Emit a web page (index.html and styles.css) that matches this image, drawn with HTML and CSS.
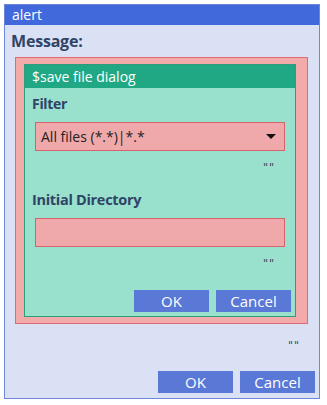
FILE: index.html
```html
<!DOCTYPE html>
<html lang="en">
<head>
    <meta charset="UTF-8">
    <title>alert</title>
    <link rel="stylesheet" href="styles.css">
</head>
<body>
    <div class="window">
        <div class="title">alert</div>
        <div class="window-body">
            <div class="label msg">Message:</div>
            <div class="frame">
                <div class="dialog">
                    <div class="dialog-title">$save file dialog</div>
                    <div class="dialog-body">
                        <div class="label">Filter</div>
                        <div class="field select">
                            <span>All files (*.*)|*.*</span>
                            <span class="arrow"></span>
                        </div>
                        <div class="quote">""</div>
                        <div class="label dir">Initial Directory</div>
                        <div class="field"></div>
                        <div class="quote">""</div>
                        <div class="buttons inner-buttons">
                            <button>OK</button>
                            <button>Cancel</button>
                        </div>
                    </div>
                </div>
            </div>
            <div class="quote outer">""</div>
            <div class="buttons outer-buttons">
                <button>OK</button>
                <button>Cancel</button>
            </div>
        </div>
    </div>
</body>
</html>
```

FILE: styles.css
```css
body {
    margin: 0;
    padding: 0;
    background-color: #fff;
    font-family: "Open Sans", "Noto Sans", sans-serif;
}

.window {
    margin: 4px 0 0 4px;
    width: 314px;
    height: 393px;
    border: 1px solid #6f87d8;
    background-color: #dbe1f5;
    display: flex;
    flex-direction: column;
}

.title {
    height: 20px;
    line-height: 19px;
    background-color: #4169dc;
    color: #fff;
    font-size: 14px;
    padding-left: 7px;
}

.window-body {
    flex: 1;
    display: flex;
    flex-direction: column;
}

.label {
    color: #2f4466;
    font-weight: bold;
    font-size: 14px;
    letter-spacing: -0.3px;
}

.msg {
    margin: 5px 0 0 6px;
    height: 22px;
    line-height: 22px;
    font-size: 16px;
    letter-spacing: -0.2px;
}

.frame {
    margin: 5px 11px 0 10px;
    height: 267px;
    border: 1px solid #df6a72;
    background-color: #f2aaaa;
    padding: 6px 11px 8px 8px;
    box-sizing: border-box;
}

.dialog {
    height: 253px;
    box-sizing: border-box;
    border: 1px solid #2e9e7a;
    background-color: #99e0cd;
    display: flex;
    flex-direction: column;
}

.dialog-title {
    height: 23px;
    line-height: 23px;
    background-color: #20a884;
    color: #fff;
    font-size: 14px;
    padding-left: 7px;
}

.dialog-body {
    display: flex;
    flex-direction: column;
    padding: 0 10px 0 10px;
}

.dialog-body .label {
    margin: 6px 0 0 -3px;
    height: 20px;
    line-height: 20px;
}

.dialog-body .dir {
    margin-top: 16px;
    font-size: 14.5px;
}

.field {
    margin-top: 8px;
    height: 29px;
    box-sizing: border-box;
    border: 1px solid #d4636e;
    background-color: #f0a9aa;
}

.select {
    display: flex;
    align-items: center;
    justify-content: space-between;
    padding: 0 8px 0 5px;
    font-size: 14px;
    color: #222;
}

.arrow {
    width: 0;
    height: 0;
    border-left: 5px solid transparent;
    border-right: 5px solid transparent;
    border-top: 5px solid #111;
}

.quote {
    text-align: right;
    font-family: "DejaVu Sans", sans-serif;
    font-size: 11px;
    letter-spacing: 1px;
    color: #3a4a5a;
    height: 12px;
    line-height: 12px;
    margin-top: 11px;
    padding-right: 10px;
}

.buttons {
    display: flex;
    justify-content: flex-end;
    gap: 7px;
}

.buttons button {
    width: 75px;
    height: 22px;
    padding: 0;
    border: none;
    background-color: #5a78d6;
    color: #fff;
    font-family: "Open Sans", "Noto Sans", sans-serif;
    font-size: 15px;
}

.inner-buttons {
    margin: 20px -6px 0 0;
}

.outer {
    margin-top: 16px;
    padding-right: 19px;
}

.outer-buttons {
    margin-top: 19px;
    padding-right: 4px;
}
```
